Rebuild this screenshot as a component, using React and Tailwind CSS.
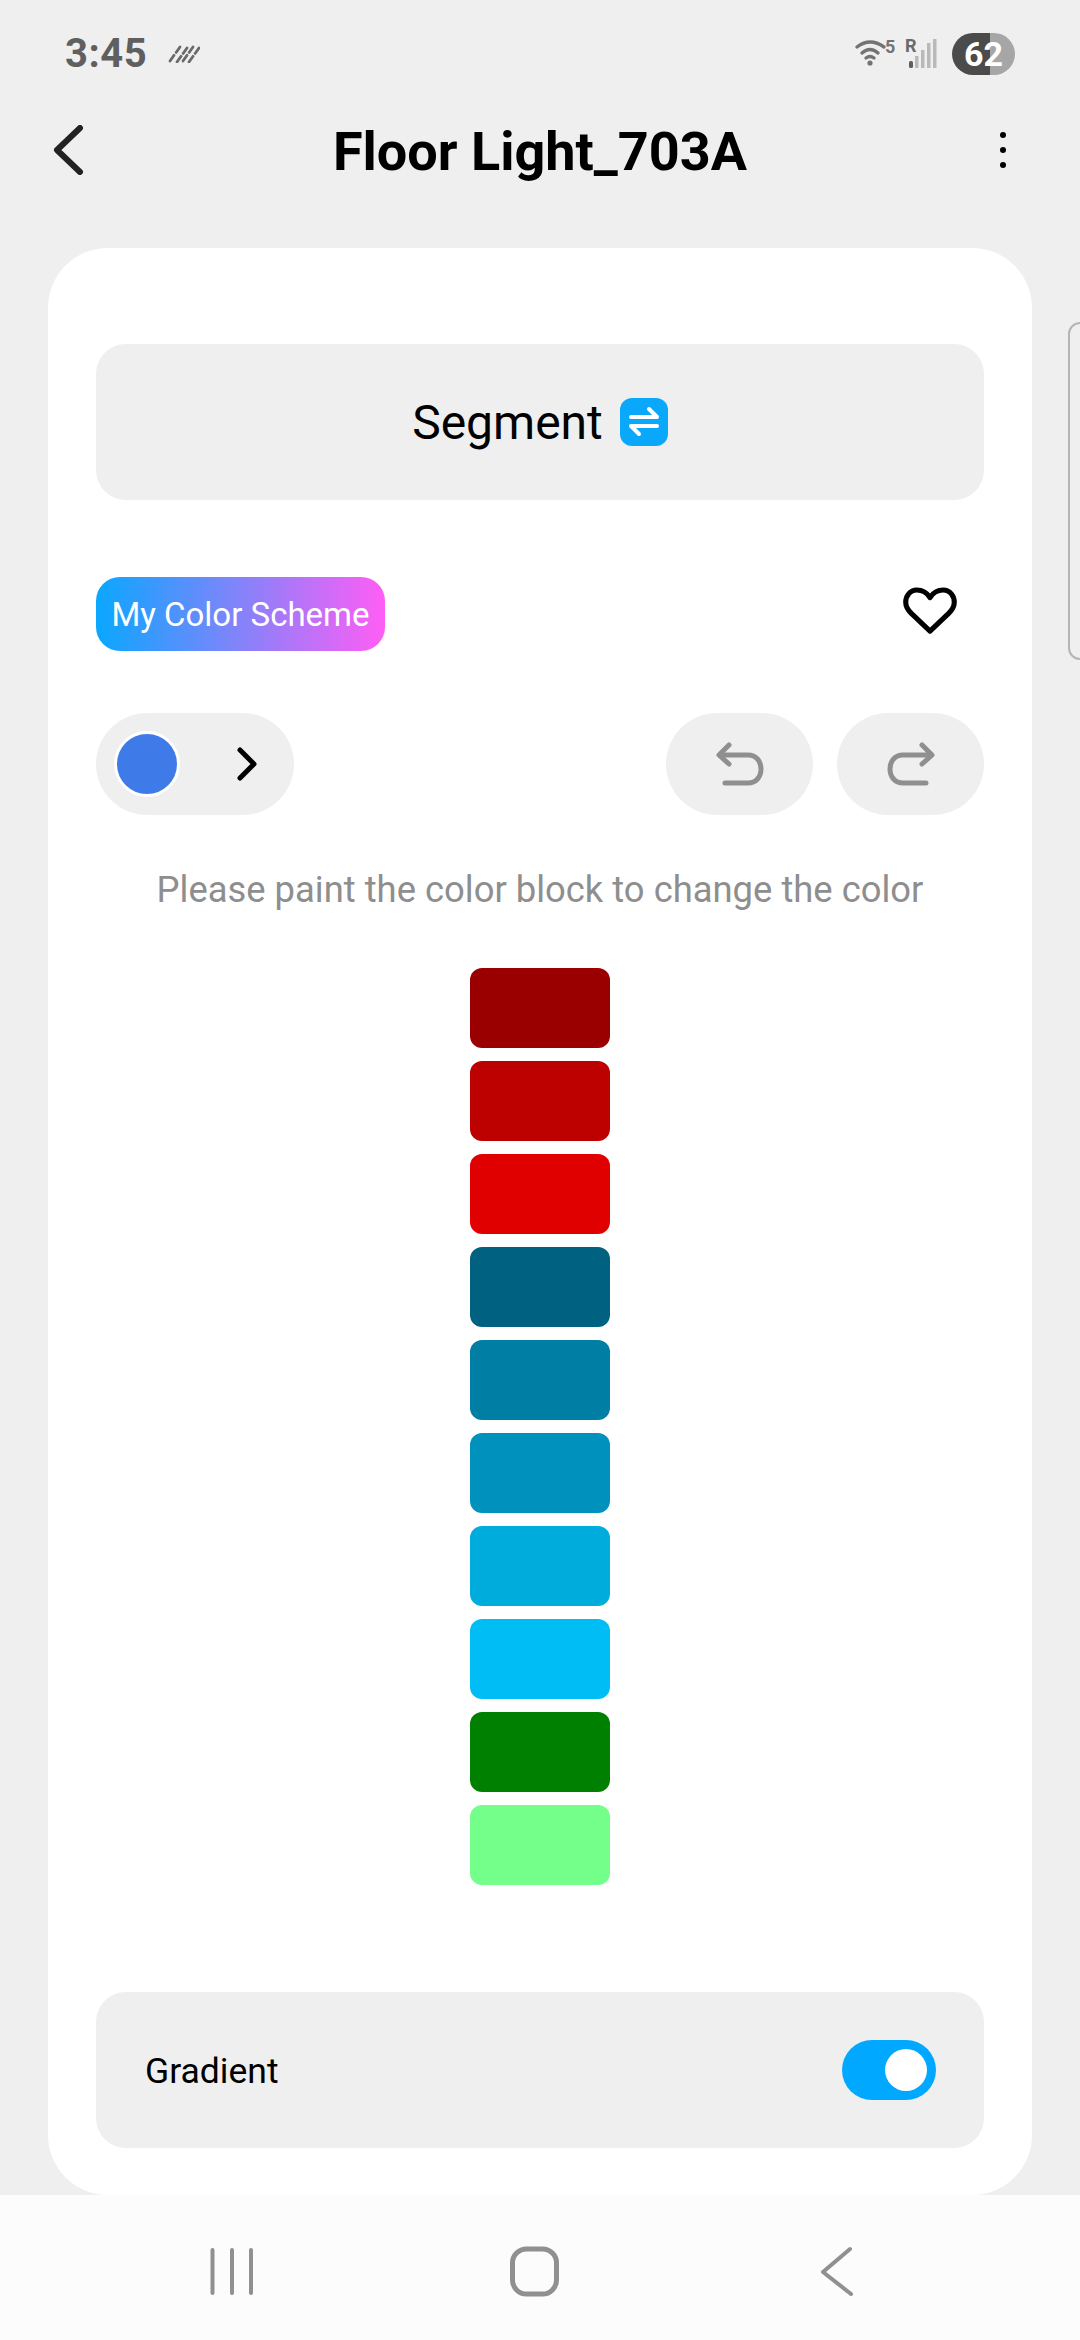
import React from 'react';

const blocks = ['#9b0000', '#bd0000', '#e00000', '#006280', '#007ea3', '#0092bc', '#00acdc', '#00bef5', '#008000', '#73ff8a'];

const StatusBar = () => (
  <div className="h-[108px] flex items-center justify-between pl-[65px] pr-[65px]">
    <div className="flex items-center gap-[21px]">
      <span className="text-[40px] leading-none font-bold text-[#5f5f5f] font-['Roboto',sans-serif] tracking-[0.5px]">3:45</span>
      {/* data saver hatch */}
      <svg width="32" height="18" viewBox="0 0 32 18" fill="none" stroke="#6a6a6a" strokeWidth="2.8" strokeLinecap="round" strokeDasharray="7 3.5">
        <path d="M2 16 L12 2" />
        <path d="M9 17 L19 3" />
        <path d="M15 16 L25 2" />
        <path d="M21 17 L31 3" />
      </svg>
    </div>
    <div className="flex items-center gap-[15px]">
      <svg width="83" height="40" viewBox="0 0 83 40" fill="none">
        <g stroke="#737373" strokeWidth="3.4" strokeLinecap="round">
          <path d="M3 13 Q16 3 30 13" />
          <path d="M8 19 Q16 12 24 19" />
          <path d="M12 24 Q16 21 20 24" />
        </g>
        <circle cx="16" cy="29" r="2.6" fill="#737373" />
        <text x="31" y="19" fontSize="18" fontWeight="700" fill="#737373" fontFamily="Roboto, sans-serif">5</text>
        <text x="51" y="18" fontSize="18" fontWeight="700" fill="#6a6a6a" fontFamily="Roboto, sans-serif">R</text>
        <rect x="55" y="27" width="4" height="7" rx="1.5" fill="#5f5f5f" />
        <rect x="61" y="22" width="3.5" height="12" fill="#b9b9b9" />
        <rect x="67" y="16" width="3.5" height="18" fill="#b9b9b9" />
        <rect x="73" y="9" width="3.5" height="25" fill="#b9b9b9" />
        <rect x="79" y="5" width="3.5" height="29" fill="#b9b9b9" />
      </svg>
      <div className="w-[63px] h-[42px] rounded-full bg-[linear-gradient(90deg,#4b4b4b_60%,#a6a6a6_60%)] flex items-center justify-center text-white font-bold text-[34px] leading-none font-['Roboto',sans-serif]">62</div>
    </div>
  </div>
);

const Header = () => (
  <div className="h-[88px] flex items-center px-[50px] mb-[52px]">
    <div className="w-[150px] flex items-center">
      <svg width="36" height="50" viewBox="0 0 36 50" fill="none" stroke="#222222" strokeWidth="6" strokeLinecap="round" strokeLinejoin="round" className="-mt-[4px]">
        <path d="M30 3 L7 25 L30 47" />
      </svg>
    </div>
    <div className="flex-1 text-center text-[54px] leading-none font-bold text-black font-['Roboto',sans-serif]">Floor Light_703A</div>
    <div className="w-[150px] flex justify-end pr-[24px]">
      <div className="flex flex-col gap-[9px] -mt-[4px]">
        <div className="w-[6px] h-[6px] rounded-full bg-black" />
        <div className="w-[6px] h-[6px] rounded-full bg-black" />
        <div className="w-[6px] h-[6px] rounded-full bg-black" />
      </div>
    </div>
  </div>
);

const RoundBtn = ({ children }) => (
  <div className="w-[147px] h-[102px] rounded-full bg-[#efefef] flex items-center justify-center">{children}</div>
);

const Card = () => (
  <div className="mx-[48px] h-[1947px] bg-white rounded-[60px] px-[48px] pt-[96px] flex flex-col font-['Roboto',sans-serif]">
    <div className="h-[156px] rounded-[30px] bg-[#efefef] flex items-center justify-center gap-[17px]">
      <span className="text-[48px] leading-none text-black pt-[2px]">Segment</span>
      <div className="w-[48px] h-[48px] rounded-[12px] bg-[#0aa8fb] flex items-center justify-center">
        <svg width="32" height="32" viewBox="0 0 32 32" fill="none" stroke="white" strokeWidth="4" strokeLinecap="round" strokeLinejoin="round">
          <path d="M3 11 H29 L21 3" />
          <path d="M29 20 H3 L11 28" />
        </svg>
      </div>
    </div>

    <div className="mt-[77px] h-[74px] flex items-center justify-between">
      <div className="w-[289px] h-[74px] rounded-[24px] bg-linear-to-r/srgb from-[#0aa7ff] to-[#ff5ef5] flex items-center justify-center text-white text-[33px] leading-none">My Color Scheme</div>
      <svg width="56" height="49" viewBox="0 0 60 52" fill="none" stroke="black" strokeWidth="5.5" strokeLinejoin="round" className="mr-[26px] -mt-[5px]">
        <path d="M30 11 C26 5 21 3 16 3 C8 3 4 10 4 16 C4 21 6 24 10 28 L30 47 L50 28 C54 24 56 21 56 16 C56 10 52 3 44 3 C39 3 34 5 30 11 Z" />
      </svg>
    </div>

    <div className="mt-[62px] flex items-center justify-between">
      <div className="w-[198px] h-[102px] rounded-full bg-[#efefef] flex items-center pl-[18px]">
        <div className="w-[66px] h-[66px] rounded-full bg-[#3f7be8] border-[3px] border-white" />
        <svg width="24" height="36" viewBox="0 0 24 36" fill="none" stroke="black" strokeWidth="5" strokeLinecap="round" strokeLinejoin="round" className="ml-[55px]">
          <path d="M5 4 L19 18 L5 32" />
        </svg>
      </div>
      <div className="flex items-center gap-[24px]">
        <RoundBtn>
          <svg width="48" height="44" viewBox="0 0 48 44" fill="none" stroke="#8f8f8f" strokeWidth="5" strokeLinecap="round" strokeLinejoin="round">
            <path d="M13 3 L3 13 L13 22" />
            <path d="M4 13 H32 C40 13 45 19 45 27 C45 35 40 41 32 41 H9" />
          </svg>
        </RoundBtn>
        <RoundBtn>
          <svg width="48" height="44" viewBox="0 0 48 44" fill="none" stroke="#8f8f8f" strokeWidth="5" strokeLinecap="round" strokeLinejoin="round">
            <path d="M35 3 L45 13 L35 22" />
            <path d="M44 13 H16 C8 13 3 19 3 27 C3 35 8 41 16 41 H39" />
          </svg>
        </RoundBtn>
      </div>
    </div>

    <div className="mt-[45px] h-[60px] flex items-center justify-center text-[36.4px] leading-none text-[#8e8e8e]">Please paint the color block to change the color</div>

    <div className="mt-[48px] flex flex-col items-center gap-[13px]">
      {blocks.map((c) => (
        <div key={c} className="w-[140px] h-[80px] rounded-[12px]" style={{ backgroundColor: c }} />
      ))}
    </div>

    <div className="mt-[107px] h-[156px] rounded-[30px] bg-[#efefef] flex items-center justify-between pl-[49px] pr-[48px]">
      <span className="text-[35.5px] leading-none text-black pt-[3px]">Gradient</span>
      <div className="w-[94px] h-[60px] rounded-full bg-[#00a9ff] flex items-center justify-end pr-[9px]">
        <div className="w-[42px] h-[42px] rounded-full bg-white" />
      </div>
    </div>
  </div>
);

const NavBar = () => (
  <div className="h-[145px] bg-[#fcfcfc] flex items-start">
    <svg width="1080" height="145" viewBox="0 0 1080 145" fill="none" stroke="#909090" strokeWidth="4" strokeLinecap="round" strokeLinejoin="round">
      <path d="M212.500 55 V98 M232 55 V98 M251 55 V98" />
      <rect x="512.500" y="54" width="44" height="45" rx="14" strokeWidth="5" />
      <path d="M850 54 L823 77 L851 99" />
    </svg>
  </div>
);

export default function App() {
  return (
    <div className="relative w-[1080px] h-[2340px] overflow-hidden bg-[#efefef]">
      <StatusBar />
      <Header />
      <Card />
      <NavBar />
      {/* edge panel handle */}
      <div className="absolute left-[1068px] top-[322px] w-[24px] h-[338px] rounded-[14px] border-2 border-[#b5b5b5]" />
    </div>
  );
}
